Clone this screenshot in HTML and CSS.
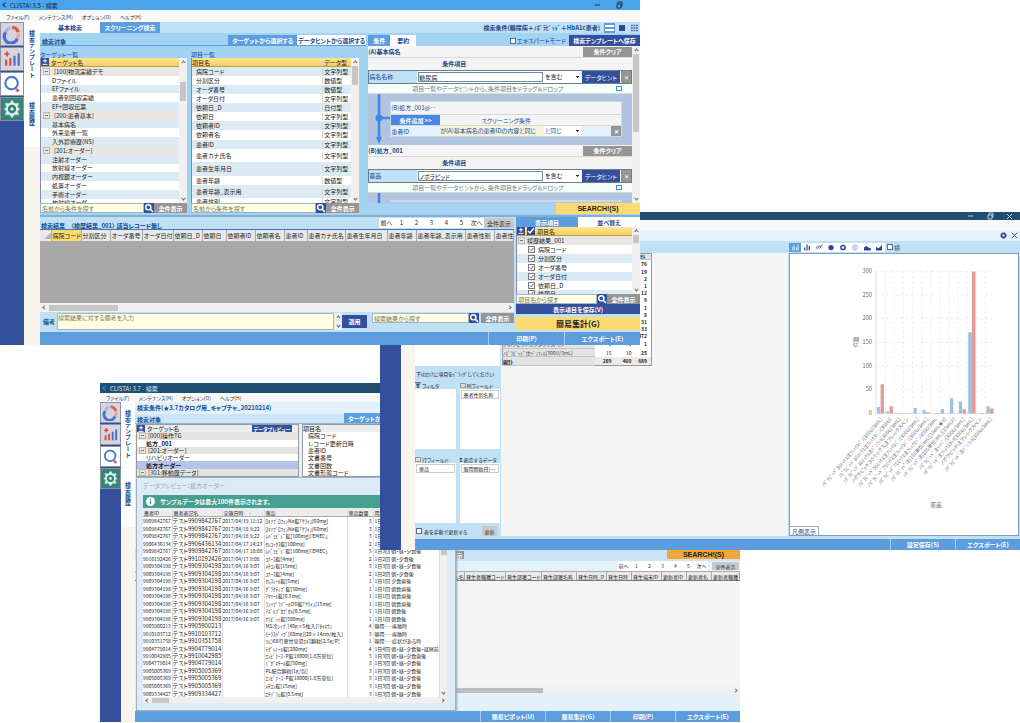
FILE: index.html
```
<!DOCTYPE html>
<html lang="ja">
<head>
<meta charset="utf-8">
<title>CLISTA! 検索</title>
<link rel="stylesheet" href="styles.css">
</head>
<body>
<svg width="0" height="0" class="defs" aria-hidden="true">
  <symbol id="i-donut" viewBox="0 0 24 24"><g fill="none" stroke-width="4"><path d="M4.500 10A8 8 0 1 0 18.500 17" stroke="#4a6fd0"/><path d="M10 4.500A8 8 0 0 0 4.500 10" stroke="#a9b6dd"/><path d="M12 4A8 8 0 0 1 19.500 10" stroke="#e2574c"/><path d="M19.800 11A8 8 0 0 1 18 17.500" stroke="#e9a79f"/></g></symbol>
  <symbol id="i-bars" viewBox="0 0 24 24"><path d="M6 3v6M3 6h6" stroke="#d8453e" stroke-width="2"/><path d="M5 13v7M10 11v9" stroke="#d8453e" stroke-width="2.500"/><path d="M15 8v12M20 5v15" stroke="#4667c8" stroke-width="2.500"/></symbol>
  <symbol id="i-query" viewBox="0 0 24 24"><circle cx="11.500" cy="11" r="7.500" fill="none" stroke="#4a78d8" stroke-width="2.600"/><path d="M17 18l3 3" stroke="#e2574c" stroke-width="3.500"/></symbol>
  <symbol id="i-gear" viewBox="0 0 24 24"><path d="M12 1.500l3 4 5-.5-1.500 4.800 3 2.200-3 2.200L20 19l-5-.5-3 4-3-4-5 .5 1.500-4.800-3-2.200 3-2.200L4 5l5 .5z" fill="#dfeee9" stroke="#b9d8cf"/><circle cx="12" cy="12" r="5" fill="#2f8272"/><circle cx="12" cy="12" r="2" fill="#dfeee9"/></symbol>
  <symbol id="i-search" viewBox="0 0 10 10"><circle cx="4.300" cy="4.300" r="2.600" fill="none" stroke="#fff" stroke-width="1.400"/><path d="M6.200 6.200L9 9" stroke="#fff" stroke-width="1.600"/></symbol>
  <symbol id="i-logo" viewBox="0 0 10 10"><path d="M8 1L3 5l5 4" fill="none" stroke="#1d3f9a" stroke-width="2"/></symbol>
  <symbol id="i-plus" viewBox="0 0 10 10"><rect width="10" height="10" fill="#34509c"/><path d="M5 1v5M2.500 3.500h5M2 8h6" stroke="#fff" stroke-width="1.200"/></symbol>
  <symbol id="i-cog" viewBox="0 0 12 12"><circle cx="6" cy="6" r="3.300" fill="none" stroke="#2b459a" stroke-width="2.600"/><circle cx="6" cy="6" r="4.800" fill="none" stroke="#2b459a" stroke-width="1.600" stroke-dasharray="2 1.770"/></symbol>
</svg>

<main class="desktop">

<section class="win win-c">
  <header class="titlebar dark"><svg class="logo light"><use href="#i-logo"/></svg><span>CLISTA! 3.7 - 検索</span></header>
  <nav class="menubar"><a href="#">ファイル(F)</a><a href="#">メンテナンス(M)</a><a href="#">オプション(O)</a><a href="#">ヘルプ(H)</a></nav>
  <div class="body">
    <nav class="rail">
      <button aria-label="グラフ"><svg><use href="#i-donut"/></svg></button>
      <button aria-label="集計"><svg><use href="#i-bars"/></svg></button>
      <button class="on" aria-label="検索"><svg><use href="#i-query"/></svg></button>
      <button class="green" aria-label="設定"><svg><use href="#i-gear"/></svg></button>
    </nav>
    <aside class="strip"><a href="#">検索テンプレート</a><a href="#">検索履歴</a></aside>
    <div class="main c-main">
      <h1 class="c-title">検索条件(★3.7カタログ用_キャプチャ_20210214)</h1>
      <div class="c-head"><h2>検索対象</h2><button class="btn blue">ターゲットから選択する</button></div>
      <div class="c-lists">
        <ul class="c-list c-left">
          <li class="h"><svg class="pl"><use href="#i-plus"/></svg>ターゲット名<button class="btn navy">データプレビュー</button></li>
          <li class="g">[000]操作TG</li><li class="i"><b>処方_001</b></li><li class="g">[201:オーダー]</li><li class="i">リハビリオーダー</li><li class="i sel"><b>処方オーダー</b></li><li class="g">[301:移動歴データ]</li>
        </ul>
        <ul class="c-list c-right">
          <li class="h">項目名</li><li class="i">病院コード</li><li class="i">レコード更新日時</li><li class="i">患者ID</li><li class="i">文書番号</li><li class="i">文書回数</li><li class="i">文書形態コード</li>
        </ul>
      </div>
      <div class="c-search"><button class="btn gray">表示</button><button class="btn orange">SEARCH!(S)</button></div>
      <div class="pager"><a href="#">前へ</a><a href="#">1</a><a href="#">2</a><a href="#">3</a><a href="#">4</a><a href="#">5</a><a href="#">次へ</a><button class="btn lgray">全件表示</button></div>
      <table class="cols c-cols">
        <colgroup><col><col class="w41"><col class="w36"><col class="w35"><col class="w30"><col class="w25"><col class="w30"><col class="w25"><col class="w25"><col class="w28"></colgroup>
        <thead><tr><th class="r">ル名</th><th>発生者職種コード</th><th>発生部署コード</th><th>発生部署名称</th><th>発生日時_D</th><th>発生日時</th><th>発生端末ID</th><th>更新者ID</th><th>更新者名</th><th>更新者職種</th></tr></thead>
      </table>
      <div class="c-empty"></div>
      <div class="hbar c-hbar"><span class="thumb"></span><i class="chev right"></i></div>
      <div class="c-gap"></div>
      <footer class="foot"><button>簡易ピボット(U)</button><button>簡易集計(G)</button><button>印刷(P)</button><button>エクスポート(E)</button></footer>

      <div class="dialog" role="dialog" aria-label="データプレビュー">
        <p class="d-title">データプレビュー：処方オーダー</p>
        <p class="banner"><svg viewBox="0 0 10 10"><circle cx="5" cy="5" r="5" fill="#fff"/><path d="M5 4.200V8M5 2v1.200" stroke="#3c9484" stroke-width="1.300"/></svg>サンプルデータは最大100件表示されます。</p>
        <div class="d-wrap">
        <table class="data">
          <colgroup><col class="w29"><col class="w50"><col class="w42"><col class="w83"><col class="w26"><col></colgroup>
          <thead><tr><th>患者ID</th><th>患者表記名</th><th>実施日時　 -</th><th>薬品</th><th>薬品数量</th><th>用法</th></tr></thead>
          <tbody>
          <tr><td>9909842767</td><td>テスト9909842767</td><td>2017/04/19 11:12</td><td>ﾛｷｿﾌﾟﾛﾌｪﾝNa錠｢ｻﾜｲ｣[60mg]</td><td>3</td><td>1日3回 朝・昼・夕食後</td></tr>
          <tr><td>9909842767</td><td>テスト9909842767</td><td>2017/04/18 9:22</td><td>ﾛｷｿﾌﾟﾛﾌｪﾝNa錠｢ｻﾜｲ｣[60mg]</td><td>3</td><td>1日3回 朝・昼・夕食後</td></tr>
          <tr><td>9909842767</td><td>テスト9909842767</td><td>2017/04/18 9:22</td><td>ﾚﾊﾞﾐﾋﾟﾄﾞ錠[100mg]｢EMEC｣</td><td>3</td><td>1日3回 朝・昼・夕食後</td></tr>
          <tr><td>9906436134</td><td>テスト9906436134</td><td>2017/04/17 14:23</td><td>ｾﾚｺｯｸｽ錠[100mg]</td><td>2</td><td>1日2回 朝・夕食後</td></tr>
          <tr><td>9909842767</td><td>テスト9909842767</td><td>2017/04/17 10:08</td><td>ﾚﾊﾞﾐﾋﾟﾄﾞ錠[100mg]｢EMEC｣</td><td>3</td><td>1日3回 朝・昼・夕食後</td></tr>
          <tr><td>9910192426</td><td>テスト9910192426</td><td>2017/04/17 9:08</td><td>ｺﾅｰｽ錠[4mg]</td><td>2</td><td>1日2回 朝・夕食後</td></tr>
          <tr><td>9909304198</td><td>テスト9909304198</td><td>2017/04/16 9:07</td><td>ﾒﾁｺﾝ錠[15mg]</td><td>3</td><td>1日3回 朝・昼・夕食後</td></tr>
          <tr><td>9909304198</td><td>テスト9909304198</td><td>2017/04/16 9:07</td><td>ｺﾅｰｽ錠[4mg]</td><td>2</td><td>1日2回 朝・夕食後</td></tr>
          <tr><td>9909304198</td><td>テスト9909304198</td><td>2017/04/16 9:07</td><td>ｸﾚｽﾄｰﾙ錠[5mg]</td><td>1</td><td>1日1回 夕食直後</td></tr>
          <tr><td>9909304198</td><td>テスト9909304198</td><td>2017/04/16 9:07</td><td>ｸﾞﾗｸﾃｨﾌﾞ錠[50mg]</td><td>1</td><td>1日1回 朝食直後</td></tr>
          <tr><td>9909304198</td><td>テスト9909304198</td><td>2017/04/16 9:07</td><td>ｱﾏﾘｰﾙ錠[0.5mg]</td><td>1</td><td>1日1回 朝食直後</td></tr>
          <tr><td>9909304198</td><td>テスト9909304198</td><td>2017/04/16 9:07</td><td>ﾗﾝｿﾌﾟﾗｿﾞｰﾙOD錠｢ｻﾜｲ｣[15mg]</td><td>1</td><td>1日1回 朝食直後</td></tr>
          <tr><td>9909304198</td><td>テスト9909304198</td><td>2017/04/16 9:07</td><td>ｱﾎﾞﾙﾌﾞｶﾌﾟｾﾙ[0.5mg]</td><td>1</td><td>1日1回 朝食後</td></tr>
          <tr><td>9909304198</td><td>テスト9909304198</td><td>2017/04/16 9:07</td><td>ｸﾗﾋﾞｯﾄ錠[500mg]</td><td>1</td><td>1日1回 朝食後</td></tr>
          <tr><td>9905900213</td><td>テスト9905900213</td><td></td><td>MS冷ｼｯﾌﾟ[40g×5枚入]｢ﾀｲﾎｳ｣</td><td>4</td><td>頓用･･･疼痛時</td></tr>
          <tr><td>9910103712</td><td>テスト9910103712</td><td></td><td>ﾓｰﾗｽﾊﾟｯﾌﾟ[60mg][20×14cm/枚入]</td><td>3</td><td>頓用･･･疼痛時</td></tr>
          <tr><td>9910351758</td><td>テスト9910351758</td><td></td><td>ﾂﾑﾗ68芍薬甘草湯ｴｷｽ顆粒[2.5g/P]</td><td>1</td><td>頓用･･･症状がある時</td></tr>
          <tr><td>9904779014</td><td>テスト9904779014</td><td></td><td>ﾃｸﾞﾚﾄｰﾙ錠[200mg]</td><td>4</td><td>1日4回 朝・昼・夕食後・就寝前</td></tr>
          <tr><td>9910042985</td><td>テスト9910042985</td><td></td><td>ｴﾝﾋﾟﾅｰｽ･P錠18000[1.8万単位]</td><td>3</td><td>1日3回 朝・昼・夕食直後</td></tr>
          <tr><td>9904779014</td><td>テスト9904779014</td><td></td><td>ﾄﾞｸﾞﾏﾁｰﾙ錠[50mg]</td><td>3</td><td>1日3回 朝・昼・夕食後</td></tr>
          <tr><td>9905005369</td><td>テスト9905005369</td><td></td><td>PL配合顆粒[1g/包]</td><td>3</td><td>1日3回 朝・昼・夕食後</td></tr>
          <tr><td>9905005369</td><td>テスト9905005369</td><td></td><td>ｴﾝﾋﾟﾅｰｽ･P錠18000[1.8万単位]</td><td>3</td><td>1日3回 朝・昼・夕食後</td></tr>
          <tr><td>9905005369</td><td>テスト9905005369</td><td></td><td>ﾒﾁｺﾝ錠[15mg]</td><td>3</td><td>1日3回 朝・昼・夕食後</td></tr>
          <tr><td>9909334427</td><td>テスト9909334427</td><td></td><td>ｴﾁｿﾞﾗﾑ錠[0.5mg]</td><td>3</td><td>1日3回 朝・昼・夕食後</td></tr>
          </tbody>
        </table>
        <div class="vbar"><i class="chev up"></i><span class="thumb"></span><i class="chev down end"></i></div>
        </div>
        <div class="hbar d-hbar"><i class="chev left"></i><span class="thumb"></span><i class="chev right end"></i></div>
      </div>
    </div>
  </div>
</section>

<section class="win win-b">
  <header class="titlebar dark"><svg class="winbtns" viewBox="0 0 60 8"><path d="M9 4h5M29 3h4v4h-4zM30 3V1h4v4h-1M48 2l5 5M53 2l-5 5" fill="none" stroke="currentColor" stroke-width=".8"/></svg></header>
  <div class="menubar"></div>
  <div class="body">
    <nav class="rail"></nav>
    <aside class="strip"></aside>
    <div class="main b-main">
      <div class="b-head"><svg class="cog"><use href="#i-cog"/></svg><svg class="cog" viewBox="0 0 10 10"><path d="M1 1l8 8M9 1L1 9" stroke="#2b459a" stroke-width="1.300"/></svg></div>
      <div class="b-body">
        <div class="fields">
          <div class="f-source"></div>
          <p class="f-hint">下のｴﾘｱに項目をﾄﾞﾗｯｸﾞしてください</p>
          <div class="f-grid">
            <section><h3><svg viewBox="0 0 8 8"><path d="M0 1h8M1.500 3h5M3 3v5M5 3v5" stroke="#222" fill="none"/></svg>フィルタ</h3><div class="drop"></div></section>
            <section><h3><i class="sq"></i>列フィールド</h3><div class="drop"><span>患者性別名称</span></div></section>
            <section><h3><i class="sq"></i>行フィールド</h3><div class="drop"><span>薬品</span></div></section>
            <section><h3><b>Σ</b> 表示するデータ</h3><div class="drop"><span>服用開始日(…</span></div></section>
          </div>
          <div class="f-foot"><label><input type="checkbox">表を手動で更新する</label><button class="btn lgray">更新</button></div>
        </div>
        <div class="pivot">
          <table>
            <colgroup><col><col class="w21"><col class="w20"><col class="w16"></colgroup>
            <thead><tr><th></th><th></th><th></th><th>総計</th></tr></thead>
            <tbody>
            <tr><th></th><td></td><td></td><td>76</td></tr><tr><th></th><td></td><td></td><td>19</td></tr><tr><th></th><td></td><td></td><td>2</td></tr><tr><th></th><td></td><td></td><td>1</td></tr><tr><th></th><td></td><td></td><td>12</td></tr><tr><th></th><td></td><td></td><td>9</td></tr><tr><th></th><td></td><td></td><td>1</td></tr><tr><th></th><td></td><td></td><td>8</td></tr><tr><th></th><td></td><td></td><td>31</td></tr><tr><th></th><td></td><td></td><td>33</td></tr><tr><th></th><td></td><td></td><td>472</td></tr>
            <tr><th>ノボラピッド注フレックスペン</th><td>0</td><td>1</td><td>1</td></tr>
            <tr><th>ﾉﾎﾞﾗﾋﾟｯﾄﾞ注ﾍﾟﾝﾌｨﾙ[300U/3mL]</th><td>15</td><td>10</td><td>25</td></tr>
            <tr class="sum"><th>総計</th><td>289</td><td>400</td><td>689</td></tr>
            </tbody>
          </table>
        </div>
        <div class="chart">
          <div class="c-tools">
            <button class="on" aria-label="棒"><svg viewBox="0 0 12 12"><path d="M3 10V5M5 10V3M8 10V6M10 10V2" stroke="#e8f2fb" stroke-width="1.300"/></svg></button>
            <button aria-label="積み上げ"><svg viewBox="0 0 12 12"><path d="M3 10V6M6 10V2M9 10V4" stroke="#2b459a" stroke-width="1.600"/></svg></button>
            <button aria-label="折れ線"><svg viewBox="0 0 12 12"><path d="M2 9l3-3 2 1 4-5M2 6l4-2 3 0" fill="none" stroke="#2b459a"/></svg></button>
            <button aria-label="円"><svg viewBox="0 0 12 12"><circle cx="6" cy="6" r="3.500" fill="#2b459a"/></svg></button>
            <button aria-label="ドーナツ"><svg viewBox="0 0 12 12"><circle cx="6" cy="6" r="2.800" fill="none" stroke="#2b459a" stroke-width="2"/></svg></button>
            <button aria-label="レーダー"><svg viewBox="0 0 12 12"><circle cx="6" cy="6" r="3.500" fill="none" stroke="#8d9ccb"/><circle cx="6" cy="6" r="1.300" fill="none" stroke="#8d9ccb"/></svg></button>
            <button aria-label="面"><svg viewBox="0 0 12 12"><path d="M2 10V6l3-2 3 2 3 1v3z" fill="#2b459a"/></svg></button>
            <button aria-label="積み上げ面"><svg viewBox="0 0 12 12"><path d="M2 10V5l3 2 3-2 2-3v8z" fill="#2b459a"/></svg></button>
            <label><input type="checkbox">横</label>
          </div>
          <div class="c-plot">
            <svg viewBox="43 147 687 816" role="img" aria-label="薬品別件数">
              <g stroke="#e4e4ea" stroke-width="2" stroke-dasharray="7 8"><path d="M302 198h356M302 269h356M302 340h356M302 412h356M302 483h356M302 554h356"/><path d="M330 198v428M357 198v428M385 198v428M412 198v428M440 198v428M467 198v428M495 198v428M522 198v428M550 198v428M577 198v428M605 198v428M632 198v428"/></g>
              <path d="M302 198v428h358" fill="none" stroke="#cfcfd6" stroke-width="2"/>
              <g fill="#97c4e6"><path d="M305 606h10v20h-10zM332 619h10v7h-10zM360 624h10v2h-10zM415 609h10v17h-10zM442 615h10v11h-10zM497 612h10v14h-10zM525 580h10v46h-10zM552 590h10v36h-10zM580 381h11v245h-11zM635 604h10v22h-10z"/></g>
              <g fill="#e49a93"><path d="M316 538h10v88h-10zM343 604h10v22h-10zM371 624h10v2h-10zM388 624h10v2h-10zM453 622h10v4h-10zM480 624h10v2h-10zM563 613h10v13h-10zM591 198h11v428h-11zM618 624h10v2h-10zM646 611h10v15h-10z"/></g>
              <g class="ax" text-anchor="end"><text x="290" y="203">300</text><text x="290" y="274">250</text><text x="290" y="345">200</text><text x="290" y="417">150</text><text x="290" y="488">100</text><text x="290" y="559">50</text><text x="290" y="630">0</text></g>
              <text class="ax" transform="translate(248 427) rotate(-90)">件数</text>
              <text class="ax" x="466" y="909">薬品</text>
              <g class="lab" text-anchor="end">
                <text transform="translate(322 644) rotate(-49)">ﾉﾎﾞﾗﾋﾟｯﾄﾞ30ﾐｯｸｽ注ﾌﾚｯｸｽﾍﾟﾝ[300U/3mL]</text>
                <text transform="translate(350 644) rotate(-49)">ﾉﾎﾞﾗﾋﾟｯﾄﾞ30ﾐｯｸｽ注ﾌﾚｯｸｽﾍﾟﾝ[300U]</text>
                <text transform="translate(377 644) rotate(-49)">ﾉﾎﾞﾗﾋﾟｯﾄﾞ30ﾐｯｸｽ注ﾍﾟﾝﾌｨﾙ[300U/3mL]</text>
                <text transform="translate(402 644) rotate(-49)">ノボラピッド３０ミックス注フレックスペン</text>
                <text transform="translate(432 644) rotate(-49)">ﾉﾎﾞﾗﾋﾟｯﾄﾞ50ﾐｯｸｽ注ﾌﾚｯｸｽﾍﾟﾝ[300U/3mL]</text>
                <text transform="translate(460 644) rotate(-49)">ﾉﾎﾞﾗﾋﾟｯﾄﾞ70ﾐｯｸｽ注ﾌﾚｯｸｽﾍﾟﾝ[300U/3mL]</text>
                <text transform="translate(487 644) rotate(-49)">ﾉﾎﾞﾗﾋﾟｯﾄﾞ70ﾐｯｸｽ注ﾌﾚｯｸｽﾍﾟﾝ300U/3mL</text>
                <text transform="translate(515 644) rotate(-49)">ﾉﾎﾞﾗﾋﾟｯﾄﾞ注[100単位/mL][10mL★V]</text>
                <text transform="translate(542 644) rotate(-49)">ﾉﾎﾞﾗﾋﾟｯﾄﾞ注[100単位/mL][10mLV]</text>
                <text transform="translate(570 644) rotate(-49)">ﾉﾎﾞﾗﾋﾟｯﾄﾞ注ｲﾉﾍﾟﾝ[300U/3mL]</text>
                <text transform="translate(597 644) rotate(-49)">ﾉﾎﾞﾗﾋﾟｯﾄﾞ注ﾌﾚｯｸｽﾀｯﾁ[300U/3mL]</text>
                <text transform="translate(622 644) rotate(-49)">ノボラピッド注フレックスペン</text>
                <text transform="translate(652 644) rotate(-49)">ﾉﾎﾞﾗﾋﾟｯﾄﾞ注ﾍﾟﾝﾌｨﾙ[300U/3mL]</text>
              </g>
            </svg>
            <button class="legend">凡例表示</button>
          </div>
        </div>
      </div>
      <footer class="foot b-foot"><button>設定保存(S)</button><button>エクスポート(E)</button></footer>
    </div>
  </div>
</section>

<section class="win win-a">
  <header class="titlebar"><svg class="logo"><use href="#i-logo"/></svg><span>CLISTA! 3.5 - 検索</span><svg class="winbtns" viewBox="0 0 60 8"><path d="M16 4h5M38 3h4v4h-4zM39 3V1h4v4h-1" fill="none" stroke="currentColor"/></svg></header>
  <nav class="menubar"><a href="#">ファイル(F)</a><a href="#">メンテナンス(M)</a><a href="#">オプション(O)</a><a href="#">ヘルプ(H)</a></nav>
  <div class="body">
    <nav class="rail">
      <button aria-label="グラフ"><svg><use href="#i-donut"/></svg></button>
      <button aria-label="集計"><svg><use href="#i-bars"/></svg></button>
      <button class="on" aria-label="検索"><svg><use href="#i-query"/></svg></button>
      <button class="green" aria-label="設定"><svg><use href="#i-gear"/></svg></button>
    </nav>
    <aside class="strip"><a href="#">検索テンプレート</a><a href="#">検索履歴</a></aside>
    <div class="main a-main">
      <div class="a-tabs"><button class="tab">基本検索</button><button class="tab blue">スクリーニング検索</button>
        <h1>検索条件(糖尿病＋ﾉﾎﾞﾗﾋﾟｯﾄﾞ＋HbA1c患者)</h1>
        <svg class="views" viewBox="0 0 36 10"><rect width="11" height="10" fill="#5c9ddd"/><path d="M1 3h9M1 7h9" stroke="#fff" stroke-width="2"/><rect x="15" y="2" width="6" height="6" fill="#2b459a"/><path d="M27 2.500h7M27 5h7M27 7.500h7" stroke="#4d66ae" stroke-width="1.500"/><path d="M29 1v8M31.500 1v8" stroke="#bfe0f5" stroke-width=".8"/></svg>
      </div>
      <div class="a-upper">
        <div class="a-left">
          <div class="a-head"><h2>検索対象</h2><button class="btn blue">ターゲットから選択する</button><button class="btn white">データヒントから選択する</button></div>
          <div class="a-lists">
            <section class="targets">
              <h3>ターゲット一覧</h3>
              <div class="listbox">
                <div class="list">
                  <p class="lh"><svg class="pl"><use href="#i-plus"/></svg>ターゲット名</p>
                  <ul><li class="g">[100]物流実績デモ</li><li>Dファイル</li><li>EFファイル</li><li>患者別回収実績</li><li>EF+回収伝票</li><li class="g">[200:患者基本]</li><li>基本病名</li><li>外来患者一覧</li><li>入外診療歴(NS)</li><li class="g">[201:オーダー]</li><li>注射オーダー</li><li>放射線オーダー</li><li>内視鏡オーダー</li><li>処置オーダー</li><li>手術オーダー</li><li class="half">放射線オーダ</li></ul>
                </div>
                <div class="vbar"><i class="chev up"></i><span class="thumb"></span><i class="chev down end"></i></div>
              </div>
              <div class="find"><input type="text" placeholder="名前から条件を探す" aria-label="ターゲット検索"><button class="mag" aria-label="検索"><svg><use href="#i-search"/></svg></button><button class="btn gray">全件表示</button></div>
            </section>
            <section class="items">
              <h3>項目一覧</h3>
              <div class="listbox">
                <div class="list">
                  <p class="lh two"><span>項目名</span><span>データ型</span></p>
                  <ul class="two"><li><span>病院コード</span><span>文字列型</span></li><li><span>分割区分</span><span>数値型</span></li><li><span>オーダ番号</span><span>数値型</span></li><li><span>オーダ日付</span><span>文字列型</span></li><li><span>依頼日_D</span><span>日付型</span></li><li><span>依頼日</span><span>文字列型</span></li><li><span>依頼者ID</span><span>文字列型</span></li><li><span>依頼者名</span><span>文字列型</span></li><li><span>患者ID</span><span>文字列型</span></li><li class="tall"><span>患者カナ氏名</span><span>文字列型</span></li><li class="tall"><span>患者生年月日</span><span>文字列型</span></li><li><span>患者年齢</span><span>数値型</span></li><li class="tall"><span>患者年齢_表示用</span><span>文字列型</span></li><li class="half"><span>患者性別</span><span>文字列型</span></li></ul>
                </div>
                <div class="vbar"><i class="chev up"></i><span class="thumb"></span><i class="chev down end"></i></div>
              </div>
              <div class="find"><input type="text" placeholder="名前から条件を探す" aria-label="項目検索"><button class="mag" aria-label="検索"><svg><use href="#i-search"/></svg></button><button class="btn gray">全件表示</button></div>
            </section>
          </div>
        </div>
        <div class="a-right">
          <div class="r-tabs"><button class="tab blue">条件</button><button class="tab">要約</button><label><input type="checkbox">エキスパートモード</label><button class="btn navy">検索テンプレートへ保存</button></div>
          <div class="conds">
            <div class="c-scroll">
              <div class="c-name"><b>(A)基本病名</b><button class="btn gray">条件クリア</button></div>
              <div class="c-sub">条件項目</div>
              <div class="c-row"><label for="q1">病名名称</label><input id="q1" type="text" value="糖尿病"><select aria-label="条件"><option>を含む</option></select><button class="btn navy">データヒント</button><button class="btn gray x">✕</button></div>
              <div class="c-hint"><span>項目一覧やデータヒントから、条件項目をドラッグ＆ドロップ</span><i></i></div>
              <div class="c-link">
                <svg viewBox="0 0 22 51"><path d="M11 0v44M11 24h11" stroke="#3f86ea" stroke-width="2.500"/><circle cx="11" cy="24" r="3.500" fill="#3f86ea"/><path d="M8 43h6l-3 7z" fill="#3f86ea"/></svg>
                <div class="c-card">
                  <p>(B)処方_001@…</p>
                  <div class="c-add"><button class="btn vivid">条件追加 &gt;&gt;</button><span>スクリーニング条件</span></div>
                  <div class="c-match"><label for="m1">患者ID</label><output id="m1">が(A)基本病名の患者IDの内容と同じ</output><select aria-label="一致"><option>と同じ</option></select><span></span><button class="btn gray x">✕</button></div>
                </div>
              </div>
              <div class="c-name"><b>(B)処方_001</b><button class="btn gray">条件クリア</button></div>
              <div class="c-sub">条件項目</div>
              <div class="c-row"><label for="q2">薬品</label><input id="q2" type="text" value="ノボラピッド"><select aria-label="条件"><option>を含む</option></select><button class="btn navy">データヒント</button><button class="btn gray x">✕</button></div>
              <div class="c-hint"><span>項目一覧やデータヒントから、条件項目をドラッグ＆ドロップ</span><i></i></div>
              <div class="c-link last"><svg viewBox="0 0 22 51"><path d="M11 0v51" stroke="#3f86ea" stroke-width="2.500"/></svg><div class="c-card"></div></div>
            </div>
            <div class="vbar"><i class="chev up"></i><span class="thumb"></span><i class="chev down end"></i></div>
          </div>
          <div class="a-go"><button class="btn yellow">SEARCH!(S)</button></div>
        </div>
      </div>
      <div class="a-lower">
        <div class="results">
          <div class="res-head"><h2>検索結果　〈検歴結果_001〉 該当レコード無し</h2><div class="pager"><a href="#">前へ</a><a href="#">1</a><a href="#">2</a><a href="#">3</a><a href="#">4</a><a href="#">5</a><a href="#">次へ</a><button class="btn lgray">全件表示</button></div></div>
          <table class="cols a-cols">
            <colgroup><col class="w11"><col class="w30"><col class="w29"><col class="w32"><col class="w31"><col class="w29"><col class="w24"><col class="w29"><col class="w29"><col class="w23"><col class="w38"><col class="w42"><col class="w29"><col class="w49"><col class="w29"><col></colgroup>
            <thead><tr><th class="r corner">◢</th><th class="hot">病院コード</th><th>分割区分</th><th>オーダ番号</th><th>オーダ日付</th><th>依頼日_D</th><th>依頼日</th><th>依頼者ID</th><th>依頼者名</th><th>患者ID</th><th>患者カナ氏名</th><th>患者生年月日</th><th>患者年齢</th><th>患者年齢_表示用</th><th>患者性別</th><th>患者性</th></tr></thead>
          </table>
          <div class="a-empty"></div>
          <div class="hbar a-hbar"><i class="chev left"></i><span class="thumb"></span><i class="chev right end"></i></div>
          <div class="memo"><label for="memo">備考</label><textarea id="memo" placeholder="検索結果に対する備考を入力"></textarea><div class="vbar spin"><i class="chev up"></i><i class="chev down end"></i></div><button class="btn navy">適用</button>
            <div class="find"><input type="text" placeholder="検索結果から探す" aria-label="結果検索"><button class="mag" aria-label="検索"><svg><use href="#i-search"/></svg></button><button class="btn gray">全件表示</button></div></div>
        </div>
        <div class="shown">
          <div class="s-tabs"><button class="tab blue">表示項目</button><button class="tab">並べ替え</button></div>
          <div class="listbox">
            <div class="list">
              <p class="lh"><svg class="pl"><use href="#i-plus"/></svg><input type="checkbox" class="solid" checked aria-label="全選択">項目名</p>
              <ul><li class="g">検歴結果_001</li><li><label><input type="checkbox" checked>病院コード</label></li><li><label><input type="checkbox" checked>分割区分</label></li><li><label><input type="checkbox" checked>オーダ番号</label></li><li><label><input type="checkbox" checked>オーダ日付</label></li><li><label><input type="checkbox" checked>依頼日_D</label></li><li class="half"><label><input type="checkbox" checked>依頼日</label></li></ul>
            </div>
            <div class="vbar"><i class="chev up"></i><span class="thumb"></span><i class="chev down end"></i></div>
          </div>
          <div class="find"><input type="text" placeholder="項目名から探す" aria-label="項目名検索"><button class="mag" aria-label="検索"><svg><use href="#i-search"/></svg></button><button class="btn gray">全件表示</button></div>
          <button class="btn navy save">表示項目を保存(V)</button>
          <button class="btn yellow total">簡易集計(G)</button>
        </div>
      </div>
      <footer class="foot a-foot"><button>印刷(P)</button><button>エクスポート(E)</button></footer>
    </div>
  </div>
</section>

</main>
</body>
</html>
```

FILE: styles.css
```
:root {
  --navy: #34509c;
  --ink: #174a8c;
  --blue: #5c9ddd;
  --pale: #bfe0f5;
  --sky: #a2d3f2;
  --gray: #959595;
  --yellow: #fcd971;
  --line: #d9d9d9;
}
* { box-sizing: border-box; margin: 0; padding: 0; }
body {
  background: #fff;
  color: #1c1c1c;
  font: 6px/7px "Noto Sans CJK JP", "Liberation Sans", sans-serif;
  font-feature-settings: "palt";
  white-space: nowrap;
}
button, input, select, textarea {
  font: inherit;
  font-feature-settings: inherit;
  color: inherit;
  border: 0;
  border-radius: 0;
  min-width: 0;
  background: none;
}
ul { list-style: none; }
a { color: inherit; text-decoration: none; }
h1, h2, h3 { font-size: 6px; line-height: 7px; font-weight: 700; color: var(--ink); }
svg { display: block; flex: none; }
.defs { position: absolute; }
.desktop { position: relative; min-height: 723px; overflow: hidden; }

/* Windows */
.win { position: absolute; display: flex; flex-direction: column; overflow: hidden; }
.win-a { left: 0; right: 380px; top: 0; }
.win-b { left: 380px; right: 0; top: 212px; }
.win-c { left: 100px; right: 280px; top: 383px; }
.titlebar { display: flex; align-items: center; height: 10px; background: #4ba3e9; padding: 0 1px; gap: 3px; color: #10253f; }
.titlebar.dark { background: #1f4e73; color: #dfe9f2; }
.win-b .titlebar { height: 8px; }
.logo { width: 6px; height: 6px; }
.logo.light { filter: brightness(2); }
.winbtns { width: 60px; height: 8px; margin-left: auto; color: #17385c; }
.dark .winbtns { color: #dfe9f2; }
.menubar { display: flex; align-items: center; gap: 9px; height: 12px; padding: 0 6px; background: #f8f8f8; color: #333; font-size: 5px; }
.win-b .menubar { height: 10px; }
.win-c .menubar { height: 9px; }
.body { display: flex; flex: 1; }
.rail { width: 24px; background: var(--navy); display: flex; flex-direction: column; gap: 1px; }
.win-b .rail, .win-c .rail { width: 21px; flex: none; }
.rail button { height: 24px; background: #d6d5dc; border: 1px solid #8f8fa8; display: grid; place-items: center; }
.rail button svg { width: 20px; height: 20px; }
.rail .on { background: #fff; }
.rail .green { background: #338676; }
.win-c .rail button { height: 21px; }
.win-c .rail button svg { width: 17px; height: 17px; }
.strip { width: 16px; flex: none; padding-top: 8px; background: linear-gradient(#fff 125px, #f8f4ee 125px); display: flex; flex-direction: column; align-items: center; gap: 24px; color: var(--ink); font-weight: 700; }
.strip a { writing-mode: vertical-rl; }
.win-b .strip, .win-c .strip { width: 14px; }
.win-b .strip { background: #f8f4ee; }
.main { flex: 1; min-width: 0; display: flex; flex-direction: column; }

/* Shared controls */
.btn { display: flex; align-items: center; justify-content: center; font-weight: 700; overflow: hidden; height: 10px; }
.btn.blue, .tab.blue { background: var(--blue); color: #fff; }
.btn.navy { background: var(--navy); color: #fff; }
.btn.white { background: #fff; color: var(--ink); }
.btn.gray { background: var(--gray); color: #fff; }
.btn.lgray { background: #c9c9c9; color: #333; font-weight: 400; }
.btn.vivid { background: #4a86e4; color: #fff; }
.btn.yellow { background: var(--yellow); color: #222; font-size: 7px; }
.btn.orange { background: #f2a63b; color: #222; font-size: 7px; }
.a-go .yellow, .c-search .orange { font-family: "Liberation Sans", sans-serif; }
.tab { background: #fff; color: var(--ink); font-weight: 700; }
input[type="checkbox"] { appearance: none; width: 6px; height: 6px; border: 1px solid #5a6b8c; background: #fff; flex: none; }
.chev { width: 3px; height: 3px; border: solid #666; border-width: 1px 1px 0 0; flex: none; }
.up { transform: rotate(-45deg); }
.down { transform: rotate(135deg); }
.left { transform: rotate(-135deg); }
.right { transform: rotate(45deg); }
.end { margin-top: auto; }
.vbar { width: 8px; flex: none; display: flex; flex-direction: column; align-items: center; background: #f0f0f0; padding: 3px 0; gap: 2px; }
.thumb { background: #c6c6c6; }
.vbar .thumb { width: 6px; height: 19px; }
.hbar { display: flex; align-items: center; background: #f0f0f0; padding: 0 3px; gap: 3px; }
.hbar .end { margin: 0 0 0 auto; }
.hbar .thumb { height: 6px; width: 69px; }
.find { display: flex; height: 10px; }
.find input { flex: 1; background: #ffffe1; border: 1px solid #9db8c9; padding: 0 1px; height: 10px; line-height: 8px; }
.find .gray { width: 33px; }
::placeholder { color: #76766a; opacity: 1; }
.mag { width: 10px; height: 10px; background: var(--navy); }
.mag svg { width: 10px; height: 10px; }
.pager { display: flex; justify-content: flex-end; align-items: center; height: 12px; }
.pager a { background: #fff; width: 15px; line-height: 10px; text-align: center; }
.pager .btn { width: 30px; }
.foot { display: flex; justify-content: flex-end; background: var(--blue); }
.foot button { width: 76px; height: 13px; color: #fff; font-weight: 700; border-left: 1px solid #a9cdf0; }
.cols { width: 100%; table-layout: fixed; border-collapse: collapse; }
.cols th { height: 11px; font-weight: 400; text-align: left; padding-left: 1px; border-right: 1px solid #a8a8a8; background: #e9e9e9; overflow: hidden; }
.cols th.r { text-align: right; }
.cols .corner { color: #b0b0b0; }
.cols .hot { background: var(--yellow); }
.w11 { width: 11px; } .w16 { width: 16px; } .w20 { width: 20px; } .w21 { width: 21px; }
.w23 { width: 23px; } .w24 { width: 24px; } .w25 { width: 25px; } .w26 { width: 26px; }
.w28 { width: 28px; } .w29 { width: 29px; } .w30 { width: 30px; } .w31 { width: 31px; }
.w32 { width: 32px; } .w35 { width: 35px; } .w36 { width: 36px; } .w38 { width: 38px; }
.w41 { width: 41px; } .w42 { width: 42px; } .w49 { width: 49px; } .w50 { width: 50px; }
.w83 { width: 83px; }

/* Lists */
.listbox { display: flex; flex: none; overflow: hidden; background: #fff; border-left: 1px solid #88a; }
.list { flex: 1; min-width: 0; display: flex; flex-direction: column; }
.lh { display: flex; align-items: center; gap: 2px; height: 9px; background: linear-gradient(#fde595, #f9cf5c); border-bottom: 1px solid #b99f50; flex: none; }
.pl { width: 8px; height: 8px; }
.list ul { flex: 1; display: flex; flex-direction: column; min-height: 0; }
.list li { flex: 2 2 0; min-height: 0; display: flex; align-items: center; padding-left: 11px; overflow: hidden; }
.list li:nth-child(odd) { background: #dbeaf3; }
.list li.tall { flex-grow: 3; }
.list li.half { flex-grow: 1; align-items: flex-start; }
.list li.g { background: #e9e7e3; padding-left: 2px; }
.g::before { content: ""; width: 5px; height: 5px; margin-right: 4px; border: 1px solid #b8b8b8; background: linear-gradient(#777, #777) center/3px 1px no-repeat; display: inline-block; }
.two li { padding-left: 4px; }
.two span:first-child { flex: 1; }
.two span:last-child { width: 29px; padding-left: 1px; border-left: 1px solid #d5d5d5; }

/* Screening window */
.a-main { background: var(--sky); }
.a-tabs { display: flex; align-items: center; height: 11px; background: var(--pale); }
.a-tabs .tab { height: 11px; width: 60px; }
.a-tabs h1 { margin-left: auto; }
.views { width: 36px; height: 10px; margin-left: 4px; }
.a-upper { display: flex; height: 184px; border-bottom: 2px solid #86aed0; }
.a-left { flex: 6 1 0; min-width: 0; display: flex; flex-direction: column; }
.a-right { flex: 5 1 0; min-width: 0; padding-left: 2px; }
.a-head { display: flex; align-items: flex-end; height: 13px; padding-left: 2px; border-bottom: 1px solid var(--blue); }
.a-head h2 { margin-right: auto; }
.a-head .btn { width: 69px; }
.a-lists { display: flex; gap: 4px; padding-right: 7px; }
.targets { flex: 7 1 0; min-width: 0; }
.items { flex: 8 1 0; min-width: 0; }
.a-lists h3 { height: 12px; line-height: 12px; padding-top: 3px; font-weight: 400; }
.a-lists .listbox { height: 145px; }
.targets .thumb { margin-top: 16px; }
.r-tabs { display: flex; align-items: flex-end; height: 13px; }
.r-tabs .tab { width: 22px; height: 11px; }
.r-tabs .tab + .tab { width: 26px; }
.r-tabs label { margin-left: auto; display: flex; align-items: center; gap: 1px; height: 11px; color: var(--ink); }
.r-tabs .btn { width: 71px; height: 11px; margin-left: 3px; }
.conds { display: flex; height: 157px; }
.c-scroll { flex: 1; min-width: 0; overflow: hidden; background: #f4f4f4; }
.conds .thumb { height: 78px; }
.c-name { display: flex; justify-content: space-between; align-items: center; height: 11px; color: var(--ink); }
.c-name .btn { width: 49px; }
.c-sub { height: 13px; line-height: 12px; padding-left: 74px; font-weight: 700; color: var(--ink); border-top: 1px solid var(--line); }
.c-row { display: flex; align-items: center; height: 14px; border: 1px solid #6d7c8c; background: #fff; gap: 1px; }
.c-row label { width: 48px; line-height: 12px; background: var(--pale); color: var(--ink); }
.c-row input { flex: 1; height: 10px; line-height: 8px; border: 1px solid #6d8caa; background: #fff; }
select { appearance: none; width: 37px; height: 10px; line-height: 8px; padding-left: 1px; background: linear-gradient(#333, #333) 32px 4px/3px 1px no-repeat, linear-gradient(#333, #333) 33px 5px/1px 1px no-repeat, #fff; }
.c-row .btn { height: 12px; width: 38px; font-weight: 400; }
.btn.x, .c-row .btn.x { width: 10px; }
.c-hint { display: flex; align-items: center; height: 10px; background: #f5fffa; color: #767b86; border-bottom: 1px solid var(--line); padding: 0 10px 0 44px; }
.c-hint span { flex: 1; }
.c-hint i { width: 6px; height: 5px; border: 1px solid #4a8ad0; }
.c-link { display: flex; height: 51px; padding: 0 10px 0 0; background: #b0c3df; }
.c-link svg { width: 22px; height: 51px; }
.c-card { flex: 1; min-width: 0; margin: 7px 0 8px; background: #f4f4f4; border: 1px solid #d0d8e4; color: var(--ink); }
.c-card p { height: 12px; line-height: 11px; }
.c-add { display: flex; align-items: center; height: 11px; border-top: 1px solid var(--line); }
.c-add .btn { width: 49px; }
.c-add span { padding-left: 41px; }
.c-match { display: flex; align-items: center; background: #e4f2fb; height: 11px; border-top: 1px solid var(--line); }
.c-match label { width: 49px; }
.c-match output { flex: 1; background: #f5f5dc; line-height: 10px; overflow: hidden; min-width: 0; }
.c-match span { width: 30px; }
.c-link.last { height: 14px; overflow: hidden; }
.a-go { display: flex; justify-content: flex-end; }
.a-go .btn { width: 84px; height: 11px; }
.a-lower { display: flex; height: 115px; background: var(--pale); }
.results { flex: 1; min-width: 0; padding-right: 2px; }
.res-head { display: flex; justify-content: space-between; align-items: flex-end; height: 13px; padding-left: 1px; border-bottom: 1px solid #3a78b8; }
.a-empty { height: 62px; background: #a9a9a9; }
.a-hbar { height: 9px; }
.memo { display: flex; height: 20px; padding: 1px 0; }
.memo label { width: 17px; line-height: 18px; padding-left: 3px; font-weight: 700; color: var(--ink); }
.memo textarea { flex: 1; height: 17px; background: #ffffe1; border: 1px solid #9db8c9; resize: none; overflow: hidden; line-height: 7px; }
.spin { height: 17px; }
.memo .btn.navy { width: 25px; height: 13px; margin: 2px 5px 0 0; }
.memo .find { width: 142px; }
.memo .find .gray { margin-left: 2px; }
.shown { width: 124px; display: flex; flex-direction: column; }
.s-tabs { display: flex; height: 10px; }
.s-tabs .tab { flex: 1; height: 10px; }
.shown .listbox { height: 67px; }
.shown .thumb { height: 8px; }
.shown li label { display: flex; align-items: center; gap: 3px; }
.shown li.g { padding-left: 1px; }
.shown li:nth-child(odd) { background: #dbeaf3; }
.shown li.g:first-child { background: #e9e7e3; }
.shown .g::before { margin-right: 2px; }
.shown input.solid:checked { width: 8px; height: 8px; background: url("data:image/svg+xml,%3Csvg xmlns='http://www.w3.org/2000/svg' viewBox='0 0 8 8'%3E%3Crect width='8' height='8' fill='%232b459a'/%3E%3Cpath d='M1 4l2 2 4-5' fill='none' stroke='white' stroke-width='1.500'/%3E%3C/svg%3E"); border: 0; }
.shown li input:checked { background: url("data:image/svg+xml,%3Csvg xmlns='http://www.w3.org/2000/svg' viewBox='0 0 6 6'%3E%3Cpath d='M1 3l1.500 1.500 3-3.500' fill='none' stroke='%23333'/%3E%3C/svg%3E") #fff; border-color: #777; width: 7px; height: 7px; }
.save { width: 100%; }
.total { margin-top: 3px; height: 13px; }
.shown .total { font-size: 8px; }

/* Pivot window */
.b-main { background: var(--pale); }
.b-head { display: flex; justify-content: flex-end; align-items: center; gap: 4px; height: 11px; padding-right: 2px; background: #e4f2fb; }
.cog { width: 7px; height: 7px; }
.b-body { display: flex; height: 298px; }
.fields { width: 86px; padding-right: 1px; display: flex; flex-direction: column; }
.f-source { height: 125px; background: #fff; }
.f-hint { height: 12px; line-height: 16px; padding-left: 1px; font-size: 5px; }
.f-grid { display: grid; grid-template-columns: 1fr 1fr; column-gap: 4px; row-gap: 3px; }
.f-grid section { min-width: 0; }
.f-grid h3 { height: 11px; display: flex; align-items: center; gap: 1px; color: #222; font-size: 5px; font-weight: 400; padding-top: 3px; }
.f-grid h3 svg { width: 6px; height: 6px; }
.sq { width: 6px; height: 5px; border: 1px solid #999; background: #ddd; }
.drop { height: 60px; background: #fff; padding: 1px; }
.drop span { display: block; border: 1px solid #ccc; padding-left: 2px; overflow: hidden; font-size: 5px; }
.f-foot { display: flex; align-items: center; justify-content: space-between; height: 16px; padding: 0 3px 0 1px; font-size: 5px; }
.f-foot label { display: flex; align-items: center; gap: 2px; }
.f-foot .btn { width: 15px; }
.pivot { flex: 1; min-width: 0; margin: 12px 0 3px; background: #f4f4f4; padding-left: 1px; }
.pivot table { width: 150px; height: 113px; table-layout: fixed; border-collapse: collapse; background: #fff; border: 1px solid #999; font-size: 5px; line-height: 5px; }
.pivot th { font-weight: 400; text-align: left; background: #e3e3e3; border-bottom: 1px solid #c4c4c4; overflow: hidden; color: #444; }
.pivot td { text-align: right; padding-right: 4px; }
.pivot td:last-child, .pivot thead th, .pivot .sum > * { font-weight: 700; color: #222; }
.pivot .sum td { background: #eaeaea; }
.chart { width: 232px; display: flex; flex-direction: column; }
.c-tools { display: flex; align-items: center; height: 12px; padding-left: 1px; }
.c-tools button { width: 12px; height: 9px; background: #fff; }
.c-tools button svg { width: 12px; height: 9px; }
.c-tools .on { background: var(--blue); }
.c-tools label { display: flex; align-items: center; gap: 1px; color: var(--ink); padding-left: 2px; }
.c-plot { flex: 1; margin: 0 1px 3px; background: #fff; border: 1px solid #7f9fc0; display: flex; flex-direction: column; }
.c-plot svg { width: 100%; height: 272px; }
.legend { width: 29px; height: 9px; border: 1px solid #9ab0cc; border-width: 1px 1px 0 0; color: var(--ink); margin-top: auto; }
.ax { font-size: 17px; fill: #6a6a6a; }
.lab { font-size: 15px; fill: #6a6a6a; }
.b-foot button { width: 65px; height: 11px; }

/* Preview window */
.c-main { position: relative; background: #e3f1fb; }
.c-title { height: 12px; line-height: 12px; padding-left: 2px; }
.c-head { display: flex; align-items: flex-end; height: 10px; padding-left: 2px; background: #cbe4f6; border-bottom: 1px solid #8fb6d8; }
.c-head .btn { width: 69px; margin-left: auto; margin-right: 327px; }
.c-lists { display: flex; gap: 3px; height: 125px; padding-left: 1px; }
.c-left { width: 163px; }
.c-right { flex: 1; }
.c-list { height: 53px; background: #fff; border: 1px solid #999; display: flex; flex-direction: column; }
.c-list li { flex: 1 1 0; min-height: 0; display: flex; align-items: center; padding-left: 9px; }
.c-list li.h { padding-left: 0; gap: 2px; background: #ececec; }
.c-list li.g { padding-left: 2px; background: #e6e4e2; }
.c-list li.g::before { margin-right: 2px; }
.c-list li.sel { background: #b3c3ea; }
.c-list .btn { width: 40px; height: 7px; margin-left: auto; margin-right: 6px; font-size: 5px; }
.c-right li.i { padding-left: 5px; }
.c-search { display: flex; justify-content: space-between; height: 12px; background: #cbe4f6; padding-left: 314px; }
.c-search .gray { width: 15px; height: 8px; margin-top: 2px; }
.c-search .orange { width: 73px; height: 10px; }
.win-c .pager { height: 10px; font-size: 5px; }
.win-c .pager a { width: 13px; }
.win-c .pager .btn { width: 27px; height: 8px; margin: 0 1px 0 4px; }
.c-cols th { height: 9px; border-top: 1px solid #aaa; border-bottom: 1px solid #777; font-size: 5px; }
.c-empty { height: 106px; background: #f4f4f4; }
.c-hbar { height: 7px; padding-left: 320px; justify-content: space-between; }
.c-hbar .thumb { width: 88px; height: 5px; background: #bdbdbd; }
.c-gap { height: 17px; }
.win-c .foot button { width: 65px; height: 11px; }
.dialog { position: absolute; left: 1px; top: 75px; width: 320px; bottom: 11px; padding: 0 8px 0 6px; background: #dcebf6; border: 1px solid #9fb2c4; box-shadow: 1px 0 2px #8aa; }
.d-title { height: 17px; line-height: 15px; color: #9aa4ae; }
.banner { display: flex; align-items: center; gap: 5px; height: 13px; padding-left: 3px; background: #45a090; color: #fff; font-weight: 700; margin-bottom: 1px; }
.banner svg { width: 9px; height: 9px; }
.d-wrap { display: flex; background: #fff; }
.data { flex: 1; height: 188px; table-layout: fixed; border-collapse: collapse; width: 0; }
.data th, .data td { text-align: left; font-weight: 400; overflow: hidden; border-right: 1px solid #ddd; line-height: 7px; padding-left: 1px; font-size: 5px; }
.data th { background: #ececec; border-bottom: 1px solid #aaa; }
.data td:nth-child(2) { font-size: 6px; padding-left: 0; }
.data td:first-child, .data td:nth-child(3) { padding-left: 0; }
.data td:nth-child(5) { text-align: right; padding-right: 1px; }
.d-wrap .vbar { width: 7px; padding-top: 10px; }
.d-wrap .thumb { height: 9px; margin-top: 22px; }
.d-hbar { height: 6px; }
.d-hbar .thumb { width: 17px; height: 5px; }
```
